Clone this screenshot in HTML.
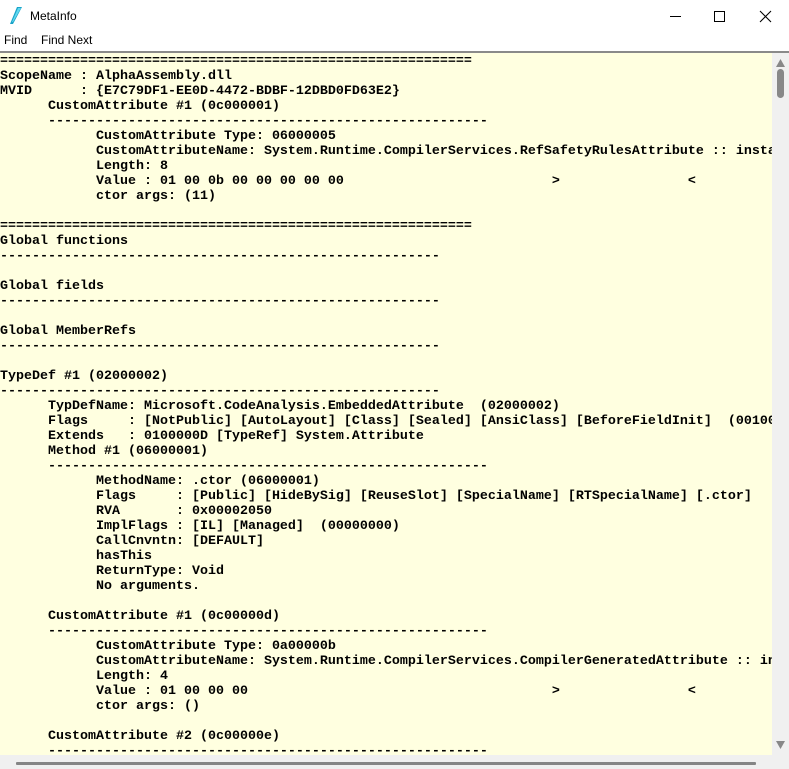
<!DOCTYPE html>
<html><head><meta charset="utf-8"><style>
*{margin:0;padding:0;box-sizing:border-box}
body{width:789px;height:769px;overflow:hidden;background:#fff;font-family:"Liberation Sans",sans-serif;position:relative}
.title{position:absolute;left:0;top:0;width:789px;height:31px;background:#fff}
.title .t{position:absolute;left:30px;top:9px;font-size:12px;color:#000}
.menu{position:absolute;left:0;top:31px;height:20px;font-size:12px}
.menu span{position:absolute;top:2px;white-space:nowrap}
.line{position:absolute;left:0;top:51px;width:789px;height:2px;background:#8a8a8a}
.area{position:absolute;left:0;top:53px;width:772px;height:702px;background:#ffffe0;overflow:hidden}
pre{font-family:"Liberation Mono",monospace;font-weight:bold;font-size:13.33px;line-height:15px;color:#000;white-space:pre;margin-top:1px}
.vs{position:absolute;left:772px;top:53px;width:17px;height:702px;background:#f0f0f0}
.hs{position:absolute;left:0;top:755px;width:789px;height:14px;background:#f0f0f0}
</style></head><body>
<div class="title">
<svg style="position:absolute;left:9px;top:7px" width="14" height="18" viewBox="0 0 14 18"><polygon points="8,0 13,0 4,17 1,17" fill="#1aa3c8"/><polygon points="9,1 12,1 4,15 3,15" fill="#5fd8f0"/></svg>
<div class="t">MetaInfo</div>
<svg style="position:absolute;left:668px;top:10px" width="110" height="14"><line x1="2" y1="6.5" x2="13" y2="6.5" stroke="#000"/><rect x="46.5" y="1.5" width="10" height="10" fill="none" stroke="#000"/><path d="M92 1L103 12M103 1L92 12" stroke="#000" stroke-width="1.1"/></svg>
</div>
<div class="menu"><span style="left:4px">Find</span><span style="left:41px">Find Next</span></div>
<div class="line"></div>
<div class="area"><pre>===========================================================
ScopeName : AlphaAssembly.dll
MVID      : {E7C79DF1-EE0D-4472-BDBF-12DBD0FD63E2}
      CustomAttribute #1 (0c000001)
      -------------------------------------------------------
            CustomAttribute Type: 06000005
            CustomAttributeName: System.Runtime.CompilerServices.RefSafetyRulesAttribute :: instance void .ctor(int32)
            Length: 8
            Value : 01 00 0b 00 00 00 00 00                          &gt;                &lt;
            ctor args: (11)

===========================================================
Global functions
-------------------------------------------------------

Global fields
-------------------------------------------------------

Global MemberRefs
-------------------------------------------------------

TypeDef #1 (02000002)
-------------------------------------------------------
      TypDefName: Microsoft.CodeAnalysis.EmbeddedAttribute  (02000002)
      Flags     : [NotPublic] [AutoLayout] [Class] [Sealed] [AnsiClass] [BeforeFieldInit]  (00100100)
      Extends   : 0100000D [TypeRef] System.Attribute
      Method #1 (06000001)
      -------------------------------------------------------
            MethodName: .ctor (06000001)
            Flags     : [Public] [HideBySig] [ReuseSlot] [SpecialName] [RTSpecialName] [.ctor]
            RVA       : 0x00002050
            ImplFlags : [IL] [Managed]  (00000000)
            CallCnvntn: [DEFAULT]
            hasThis
            ReturnType: Void
            No arguments.

      CustomAttribute #1 (0c00000d)
      -------------------------------------------------------
            CustomAttribute Type: 0a00000b
            CustomAttributeName: System.Runtime.CompilerServices.CompilerGeneratedAttribute :: instance void .ctor()
            Length: 4
            Value : 01 00 00 00                                      &gt;                &lt;
            ctor args: ()

      CustomAttribute #2 (0c00000e)
      -------------------------------------------------------
</pre></div>
<div class="vs">
<svg width="17" height="702"><polygon points="4,14 13,14 8.5,6" fill="#888"/><rect x="5" y="16" width="7" height="29" rx="3.5" fill="#888"/><polygon points="4,688 13,688 8.5,696" fill="#888"/></svg>
</div>
<div class="hs"><div style="position:absolute;left:16px;top:7px;width:740px;height:3px;background:#858585;border-radius:1px"></div></div>
</body></html>
